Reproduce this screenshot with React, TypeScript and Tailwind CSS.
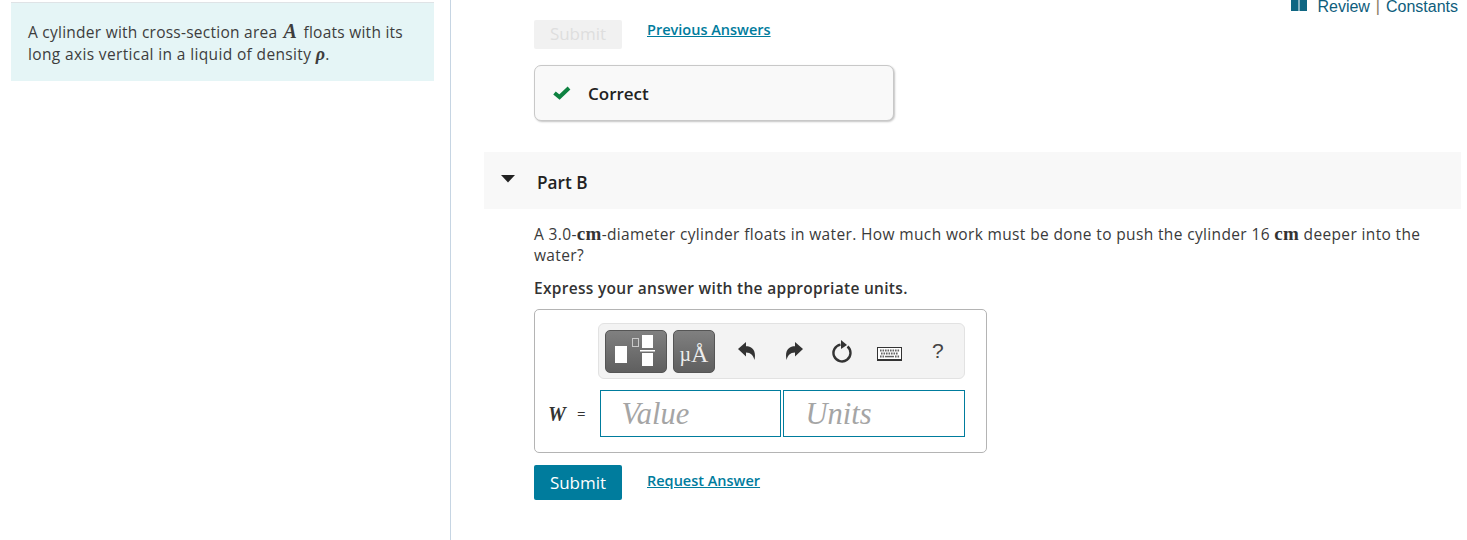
import React from "react";

const sans = "font-['Open_Sans','Noto_Sans',sans-serif]";
const serif = "font-['Liberation_Serif',serif]";

function Undo({ flip }: { flip?: boolean }) {
  return (
    <svg width="18" height="18" viewBox="0 0 18 18" className={flip ? "-scale-x-100" : ""}>
      <path d="M0 7 L8 0 V4.3 C14 4.3 18.500 8 16.500 18 C15 13 13 10.800 8 10.500 V14.500 Z" fill="#333" />
    </svg>
  );
}

function Keyboard() {
  return (
    <svg width="25" height="14" viewBox="0 0 25 14" className="mt-[6px]">
      <rect x="0.5" y="0.5" width="24" height="13" fill="#fff" stroke="#333" />
      <rect x="0" y="12" width="25" height="2" fill="#333" />
      {[3, 5.5, 8, 10.5, 13, 15.5, 18, 20.5].map((x) => (
        <rect key={x} x={x} y="2.500" width="1.600" height="2" fill="#666" />
      ))}
      {[4, 6.5, 9, 11.5, 14, 16.5, 19].map((x) => (
        <rect key={x} x={x} y="5.500" width="1.600" height="2" fill="#666" />
      ))}
      {[3, 5.5, 18, 20.5].map((x) => (
        <rect key={x} x={x} y="8.500" width="1.600" height="2" fill="#666" />
      ))}
      <rect x="8" y="8.800" width="9" height="1.500" fill="#666" />
    </svg>
  );
}

function Templates() {
  return (
    <svg width="56" height="38" viewBox="0 0 56 38">
      <rect x="7" y="14" width="12" height="17" fill="#fff" />
      <rect x="24.500" y="6.500" width="6" height="8" fill="none" stroke="#c8c8c8" />
      <rect x="34" y="3" width="11" height="13" fill="#fff" />
      <rect x="32" y="18" width="15" height="1.500" fill="#fff" />
      <rect x="34" y="21" width="11" height="13" fill="#fff" />
    </svg>
  );
}

export default function App() {
  return (
    <div className={`flex h-[540px] overflow-hidden bg-white text-[#333] ${sans}`}>
      <aside className="w-[451px] shrink-0 border-r border-[#c6d5e3] pl-[11px] pr-4 pt-[2px]">
        <div className="h-[79px] border-t border-[#dfe3e6] bg-[#e5f5f6] px-[17px] pt-[18px] text-[15.5px] leading-[22px] tracking-[0.25px] text-[#3d3d3d]">
          <p>
            A cylinder with cross-section area{" "}
            <i className={`${serif} mx-[2px] text-[20px] leading-none font-bold`}>A</i> floats with its
            <br />
            <span className="tracking-[0.36px]">long axis vertical in a liquid of density</span>{" "}
            <i className={`${serif} text-[18px] leading-none font-bold`}>ρ</i>.
          </p>
        </div>
      </aside>

      <main className="min-w-0 flex-1">
        <div className="flex h-[13px] items-start justify-end gap-[10px] pr-[9px] font-['Liberation_Sans',sans-serif] text-[16px] leading-[13px] text-[#0e5d7c]">
          <svg width="16" height="11" viewBox="0 0 16 11">
            <rect x="0" y="0" width="7.500" height="11" fill="#0f6682" />
            <rect x="8.500" y="0" width="7.500" height="11" fill="#0f6682" />
          </svg>
          <span>
            Review <span className="mx-[1.5px] text-[#8a7a60]">|</span> Constants
          </span>
        </div>

        <div className="pl-[83px] pt-[7px]">
          <div className="flex items-start">
            <button className="h-[29px] w-[88px] rounded-[2px] bg-[#f1f1f1] pb-[2px] text-[17px] leading-[24px] text-[#dedede]">
              Submit
            </button>
            <a className="ml-[25px] mt-[-1px] text-[14.5px] leading-[21px] font-semibold text-[#007c9d] underline">
              Previous Answers
            </a>
          </div>
          <div className="mt-[16px] flex h-[56px] w-[360px] items-center rounded-[7px] border border-[#c8c8c8] bg-[#f9f9f9] pl-[18px] shadow-[1px_1px_2px_#c4c4c4]">
            <svg width="18" height="14" viewBox="0 0 18 14">
              <path d="M1.500 7 L6.500 11 L16 2" fill="none" stroke="#0e8241" strokeWidth="4" />
            </svg>
            <span className="ml-[17px] pt-[2px] text-[17px] font-semibold text-[#222]">Correct</span>
          </div>
        </div>

        <div className="ml-[33px] mr-[6px] mt-[31px] flex h-[57px] items-center bg-[#f8f8f8] pl-[17px]">
          <svg width="14" height="8" viewBox="0 0 14 8" className="-mt-[3px]">
            <path d="M0 0 H14 L7 7.500 Z" fill="#222" />
          </svg>
          <h2 className="ml-[22px] pt-[4px] text-[17.2px] font-semibold text-[#222]">Part B</h2>
        </div>

        <div className="pl-[83px] pr-[40px] pt-[15px]">
          <p className="text-[15.5px] leading-[21px] tracking-[0.36px] text-[#3a3a3a]">
            A 3.0-<span className={`${serif} text-[19px] leading-none font-bold tracking-[0.3px] text-[#333]`}>cm</span>-diameter cylinder floats in water. How much work must be done to push the cylinder 16{" "}
            <span className={`${serif} text-[19px] leading-none font-bold tracking-[0.3px] text-[#333]`}>cm</span> deeper into the
            <br />
            water?
          </p>
          <p className="mt-[12px] text-[15.5px] leading-[21px] font-semibold tracking-[0.3px] text-[#333]">
            Express your answer with the appropriate units.
          </p>

          <div className="mt-[10px] h-[144px] w-[453px] rounded-[5px] border border-[#b4b4b4] pl-[63px] pt-[13px]">
            <div className="flex h-[56px] w-[367px] items-center rounded-[6px] border border-[#e2e2e2] bg-[#f3f3f3] pl-[6px]">
              <div className="flex h-[43px] w-[62px] items-center justify-center rounded-[5px] border border-[#555] bg-gradient-to-b from-[#808080] to-[#5f5f5f]">
                <Templates />
              </div>
              <div className={`ml-[6px] flex h-[43px] w-[42px] items-end justify-center rounded-[5px] border border-[#555] bg-gradient-to-b from-[#808080] to-[#5f5f5f] pb-[3px] ${serif} text-[24px] leading-[30px] text-[#eee]`}>
                <span className="text-[20px]">µ</span>Å
              </div>
              <div className="ml-[23px] flex w-[18px] justify-center"><Undo /></div>
              <div className="ml-[29px] flex w-[18px] justify-center"><Undo flip /></div>
              <div className="ml-[28px] flex w-[22px] justify-center">
                <svg width="22" height="24" viewBox="0 0 22 24">
                  <path d="M16.500 7.500 A8.500 8.500 0 1 1 9.500 5.600" fill="none" stroke="#333" strokeWidth="2.400" />
                  <path d="M10 1 L16 6 L10 10 Z" fill="#333" />
                </svg>
              </div>
              <div className="ml-[24px]"><Keyboard /></div>
              <span className="ml-[30px] font-['Liberation_Sans',sans-serif] text-[21px] text-[#444]">?</span>
            </div>

            <div className="-ml-[50px] mt-[11px] flex h-[47px] items-center">
              <i className={`${serif} w-[29px] text-[20px] font-bold text-[#333]`}>W</i>
              <span className="text-[15px] text-[#333]">=</span>
              <div className={`ml-[14px] flex h-[47px] w-[181px] items-center border border-[#007c9d] pl-[21px] pt-[2px] ${serif} text-[30.5px] italic text-[#a5a5a5]`}>
                Value
              </div>
              <div className={`ml-[2px] flex h-[47px] w-[182px] items-center border border-[#007c9d] pl-[22px] pt-[2px] ${serif} text-[30.5px] italic text-[#a5a5a5]`}>
                Units
              </div>
            </div>
          </div>

          <div className="mt-[12px] flex items-start">
            <button className="h-[35px] w-[88px] rounded-[2px] bg-[#007c9d] text-[17px] text-white">
              Submit
            </button>
            <a className="ml-[25px] mt-[5px] text-[14.5px] leading-[21px] font-semibold text-[#007c9d] underline">
              Request Answer
            </a>
          </div>
        </div>
      </main>
    </div>
  );
}
